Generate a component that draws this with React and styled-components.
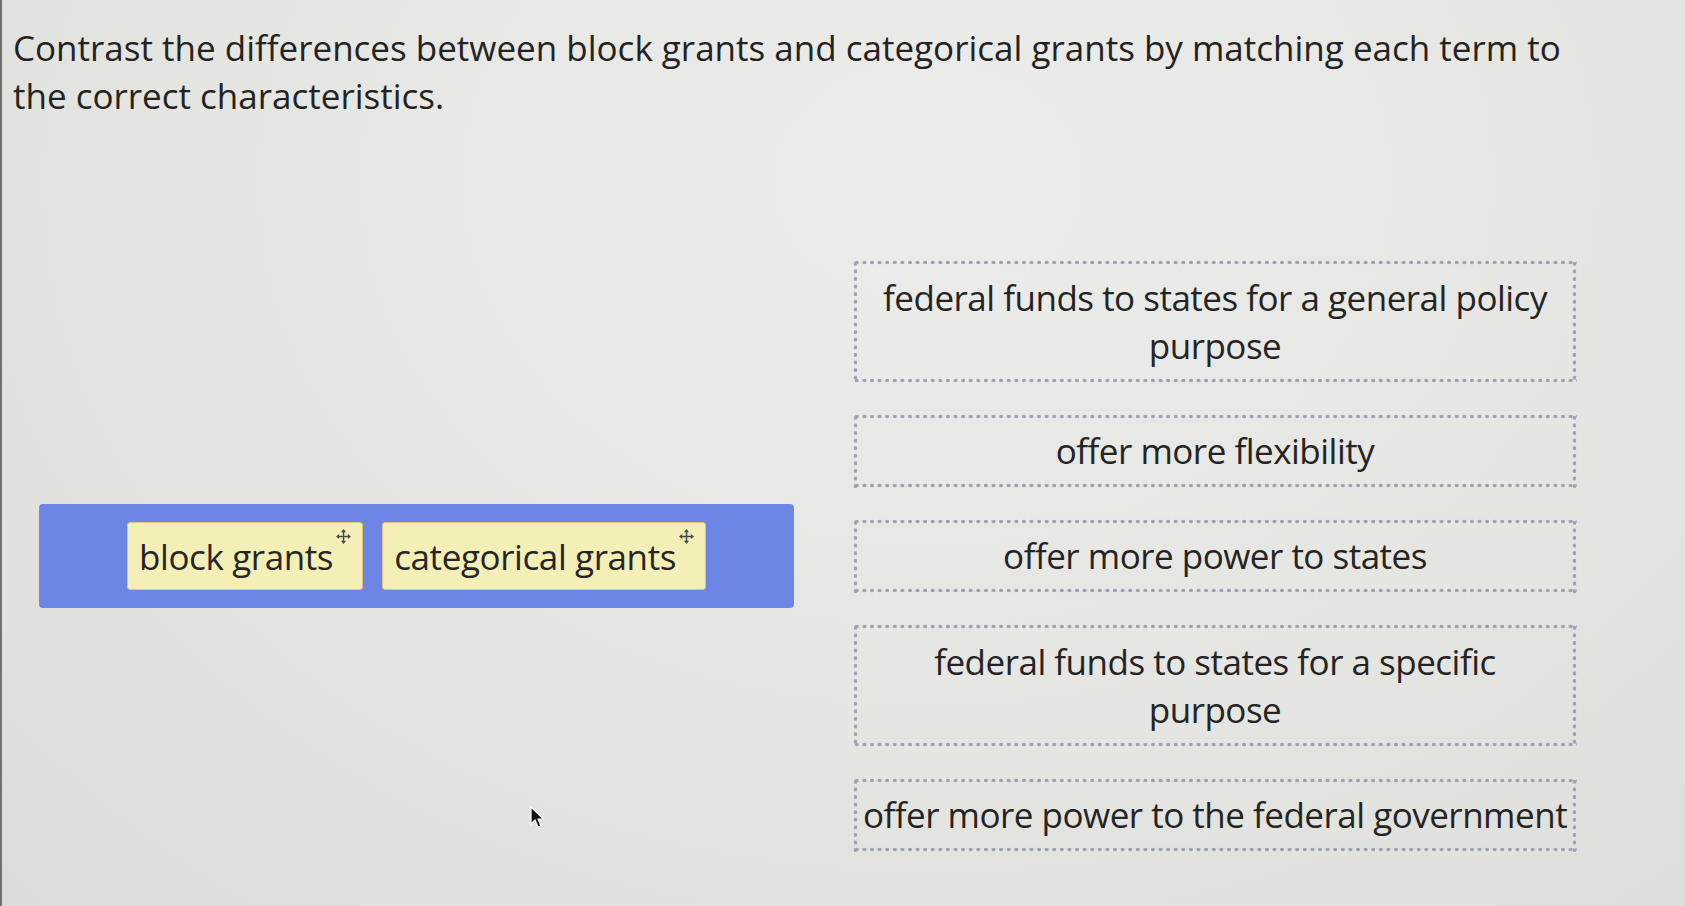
import React from 'react';
import styled, { createGlobalStyle } from 'styled-components';

const GlobalStyle = createGlobalStyle`
  html, body {
    margin: 0;
    padding: 0;
  }
  body {
    font-family: "Open Sans", "Noto Sans", sans-serif;
    background: #e4e4e1;
  }
`;

const Page = styled.div`
  position: relative;
  box-sizing: border-box;
  width: 1685px;
  height: 906px;
  overflow: hidden;
  padding: 24px 0 0 11px;
  border-left: 2px solid #707070;
  background: radial-gradient(ellipse at 55% 20%, #ececea 0%, #e5e5e2 55%, #dcdcd8 100%);
  color: #2b2b2b;
`;

const Prompt = styled.h1`
  margin: 0;
  width: 1575px;
  font-size: 35px;
  line-height: 48px;
  font-weight: 400;
  color: #232323;
  letter-spacing: 0;
`;

const Board = styled.div`
  display: flex;
  align-items: center;
  gap: 59px;
  margin: 140px 0 0 26px;
`;

const Tray = styled.div`
  box-sizing: border-box;
  width: 755px;
  height: 104px;
  display: flex;
  align-items: center;
  justify-content: center;
  gap: 19px;
  background: #6d86e6;
  border-radius: 4px;
`;

const Chip = styled.div`
  position: relative;
  box-sizing: border-box;
  height: 68px;
  padding: 0 29px 0 11px;
  display: flex;
  align-items: center;
  background: #f4efb6;
  border: 1px solid #dcc27a;
  border-radius: 3px;
  font-size: 35px;
  color: #262626;
  letter-spacing: -0.4px;
`;

const Grip = styled.svg`
  position: absolute;
  top: 6px;
  right: 11px;
  width: 15px;
  height: 15px;
`;

const Targets = styled.div`
  display: flex;
  flex-direction: column;
  gap: 31px;
  width: 724px;
`;

/* dotted frame drawn with repeating dots so the spacing is wider than border: dotted */
const dot = '#9ca0b1';

const Slot = styled.div`
  box-sizing: border-box;
  min-height: ${p => (p.$tall ? 123 : 74)}px;
  padding: 10px 8px;
  display: flex;
  align-items: center;
  justify-content: center;
  text-align: center;
  font-size: 35px;
  line-height: 48px;
  color: #242424;
  letter-spacing: -0.5px;
  background:
    radial-gradient(circle, ${dot} 1.6px, transparent 2.1px) left top / 7.6px 5px repeat-x,
    radial-gradient(circle, ${dot} 1.6px, transparent 2.1px) left bottom / 7.6px 5px repeat-x,
    radial-gradient(circle, ${dot} 1.6px, transparent 2.1px) left top / 5px 7.6px repeat-y,
    radial-gradient(circle, ${dot} 1.6px, transparent 2.1px) right top / 5px 7.6px repeat-y;
`;

const SlotText = styled.span`
  max-width: ${p => (p.$tall ? '680px' : 'none')};
`;

const Pointer = styled.svg`
  position: absolute;
  left: 528px;
  top: 806px;
  width: 16px;
  height: 24px;
`;

const MoveIcon = () => (
  <Grip viewBox="0 0 14 14">
    <g fill="none" stroke="#4a4a4a" strokeWidth="1.4">
      <line x1="7" y1="1.5" x2="7" y2="12.5" />
      <line x1="1.5" y1="7" x2="12.5" y2="7" />
    </g>
    <g fill="#4a4a4a">
      <polygon points="7,0 4.6,3 9.4,3" />
      <polygon points="7,14 4.6,11 9.4,11" />
      <polygon points="0,7 3,4.6 3,9.4" />
      <polygon points="14,7 11,4.6 11,9.4" />
    </g>
  </Grip>
);

const terms = ['block grants', 'categorical grants'];

const answers = [
  { text: 'federal funds to states for a general policy purpose', tall: true },
  { text: 'offer more flexibility' },
  { text: 'offer more power to states' },
  { text: 'federal funds to states for a specific purpose', tall: true },
  { text: 'offer more power to the federal government' },
];

export default function App() {
  return (
    <>
      <GlobalStyle />
      <Page>
        <Prompt>
          Contrast the differences between block grants and categorical grants by matching each term to the correct characteristics.
        </Prompt>
        <Board>
          <Tray>
            {terms.map(t => (
              <Chip key={t}>
                {t}
                <MoveIcon />
              </Chip>
            ))}
          </Tray>
          <Targets>
            {answers.map(a => (
              <Slot key={a.text} $tall={a.tall}>
                <SlotText $tall={a.tall}>{a.text}</SlotText>
              </Slot>
            ))}
          </Targets>
        </Board>
        <Pointer viewBox="0 0 16 24">
          <path d="M1 1 L1 18 L5 14 L8 21 L11 20 L8 13 L13.5 13 Z" fill="#111" stroke="#fff" strokeWidth="1.2" />
        </Pointer>
      </Page>
    </>
  );
}
